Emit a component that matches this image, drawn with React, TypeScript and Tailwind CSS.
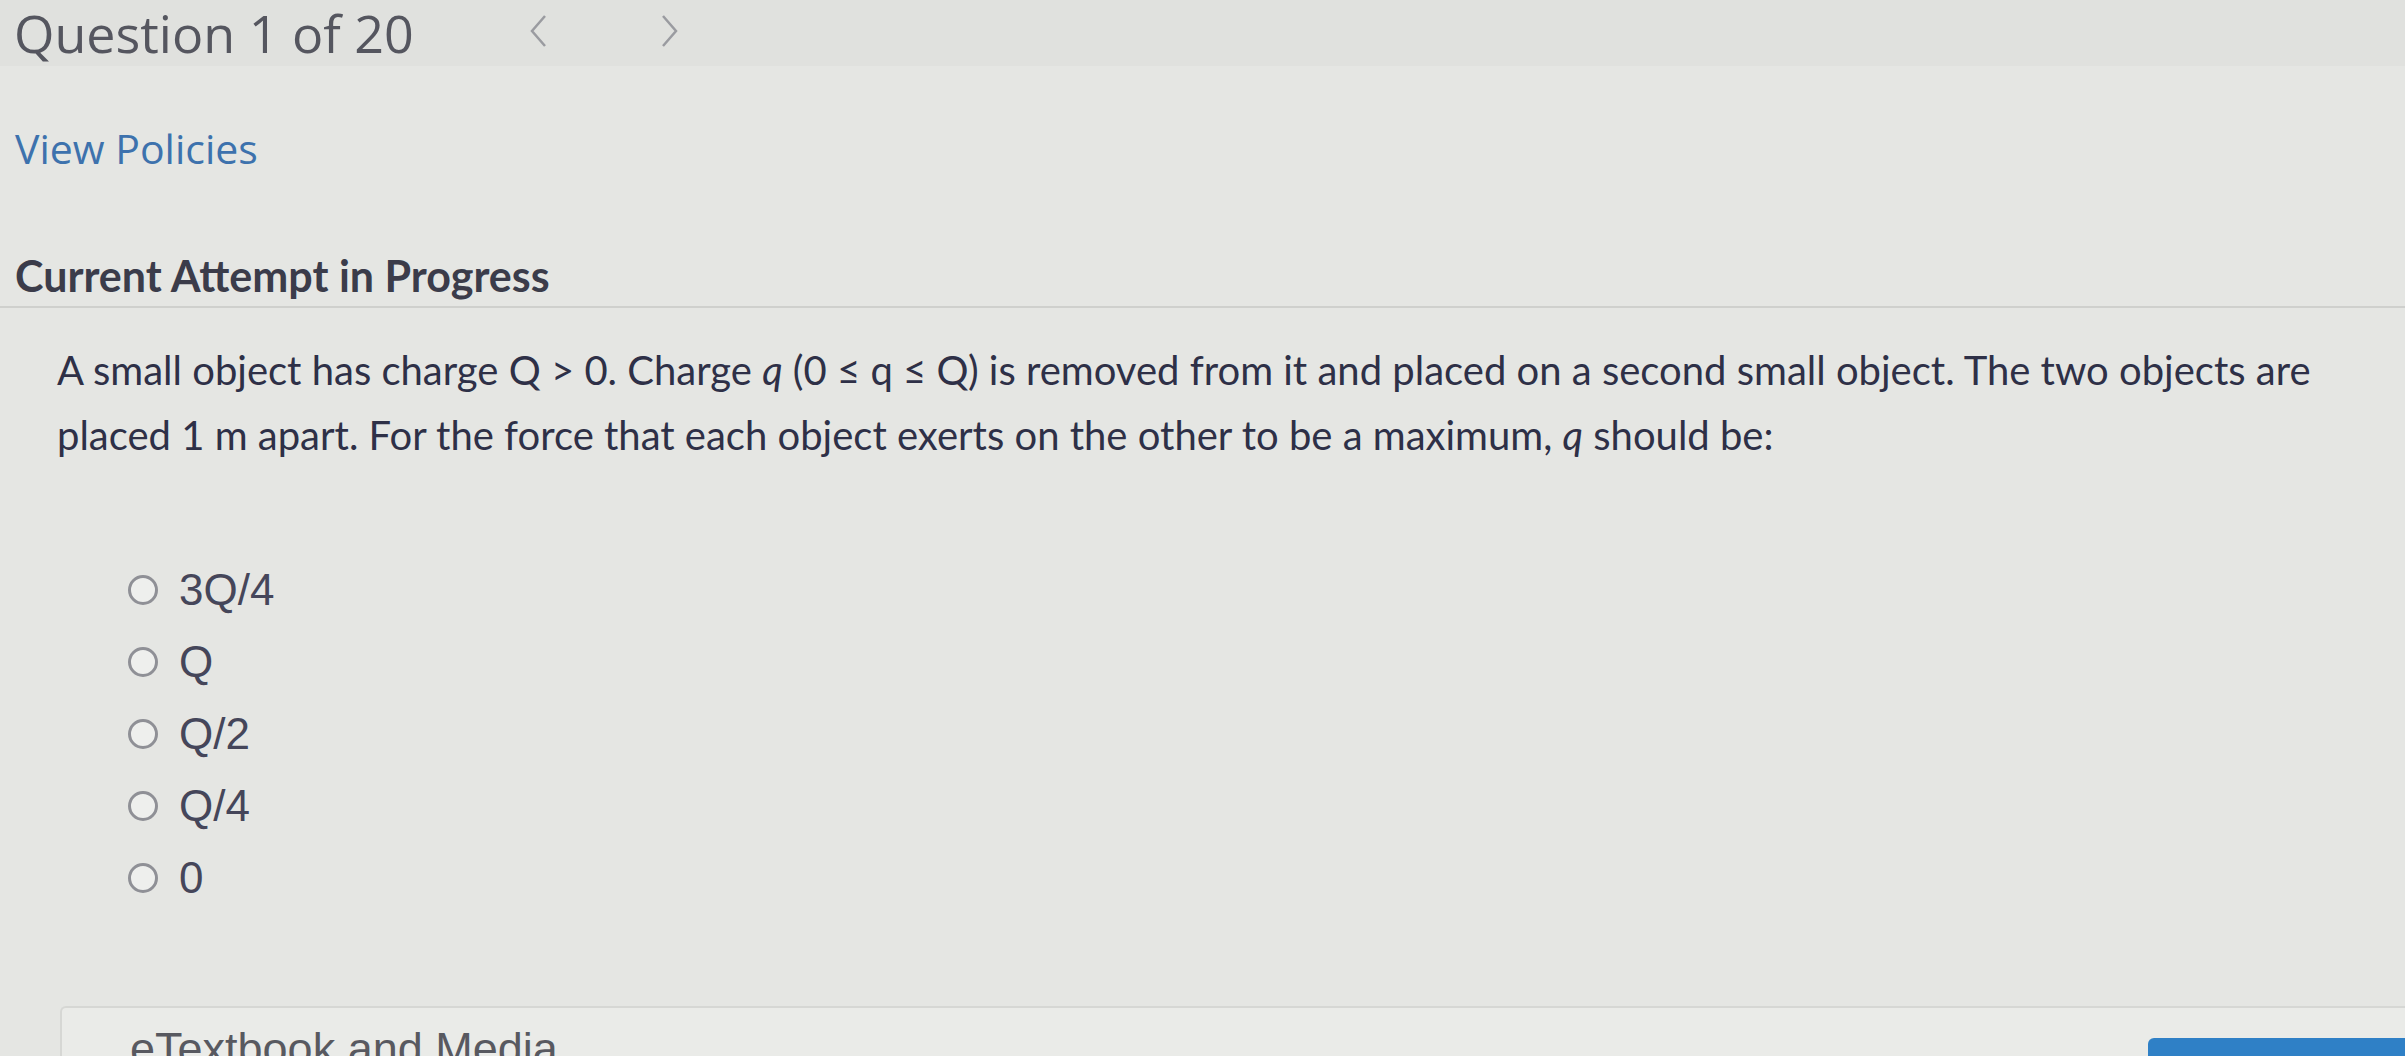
import React from "react";

const options = ["3Q/4", "Q", "Q/2", "Q/4", "0"];

export default function App() {
  return (
    <div className="w-[2405px] h-[1056px] overflow-hidden bg-[#e5e6e3] relative">
      {/* header */}
      <div className="h-[66px] bg-[#e0e1de] flex items-center px-[14px]">
        <h1
          className="text-[52px] leading-[64px] text-[#55565f]"
          style={{ fontFamily: '"Open Sans", sans-serif' }}
        >
          Question 1 of 20
        </h1>
        <div className="flex items-center ml-[110px] gap-[104px] text-[#9a9ba0] -mt-[4px]">
          <svg width="28" height="40" viewBox="0 0 28 40" fill="none" stroke="currentColor" strokeWidth="2.5">
            <path d="M21 5 L8 20 L21 35" />
          </svg>
          <svg width="28" height="40" viewBox="0 0 28 40" fill="none" stroke="currentColor" strokeWidth="2.5">
            <path d="M7 5 L20 20 L7 35" />
          </svg>
        </div>
      </div>

      <div className="px-[15px]">
        <div
          className="mt-[58px] text-[41px] leading-[48px] text-[#3d72ad]"
          style={{ fontFamily: '"Open Sans", sans-serif' }}
        >
          View Policies
        </div>

        <div
          className="mt-[80px] text-[43px] leading-[48px] font-bold text-[#3b3c4a]"
          style={{ fontFamily: "Lato, sans-serif" }}
        >
          Current Attempt in Progress
        </div>
      </div>

      <div className="mt-[6px] border-t-2 border-[#cfd0cd]" />

      <div
        className="pl-[57px] pt-[30px] text-[40px] leading-[65px] text-[#2e3047]"
        style={{ fontFamily: "Lato, sans-serif" }}
      >
        <p className="whitespace-nowrap">
          A small object has charge Q &gt; 0. Charge <i>q</i> (0 ≤ q ≤ Q) is removed from it and placed on a second small object. The two objects are
        </p>
        <p className="whitespace-nowrap">
          placed 1 m apart. For the force that each object exerts on the other to be a maximum, <i>q</i> should be:
        </p>
      </div>

      <div
        className="mt-[86px] pl-[128px] flex flex-col text-[44px] text-[#45465a]"
        style={{ fontFamily: '"Liberation Sans", Arial, sans-serif' }}
      >
        {options.map((o) => (
          <label key={o} className="h-[72px] flex items-center gap-[21px]">
            <span className="w-[30px] h-[30px] rounded-full border-[3px] border-[#8f9096] bg-[#eeefed]" />
            <span>{o}</span>
          </label>
        ))}
      </div>

      {/* bottom card */}
      <div className="mt-[92px] ml-[60px] h-[200px] rounded-tl-[6px] bg-[#eaebe8] border-t-2 border-l-2 border-[#d6d7d4] pl-[68px] pt-[18px] relative">
        <div
          className="text-[45px] leading-none text-[#585960]"
          style={{ fontFamily: '"Liberation Sans", Arial, sans-serif' }}
        >
          eTextbook and Media
        </div>
        <div className="absolute right-0 top-[30px] w-[257px] h-[80px] bg-[#2f80c6] rounded-tl-[6px]" />
      </div>
    </div>
  );
}
